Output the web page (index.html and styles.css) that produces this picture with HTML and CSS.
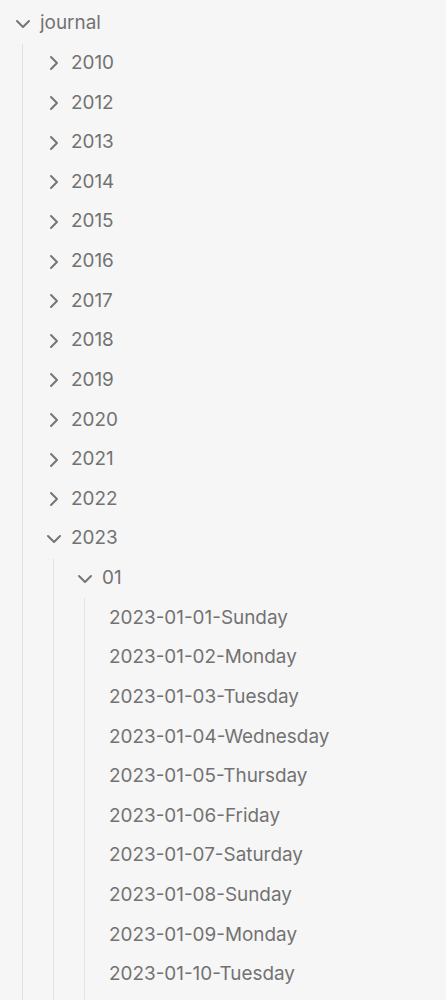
FILE: index.html
```html
<!DOCTYPE html>
<html lang="en">
<head>
<meta charset="utf-8">
<title>journal</title>
<link rel="stylesheet" href="styles.css">
</head>
<body>
<div class="tree">
  <div class="row root-row">
    <svg class="chev" viewBox="0 0 24 24"><path d="M6 9l6 6 6-6"/></svg>
    <span class="label">journal</span>
  </div>
  <div class="children root-children">
    <div class="row"><svg class="chev" viewBox="0 0 24 24"><path d="M9 6l6 6-6 6"/></svg><span class="label">2010</span></div>
    <div class="row"><svg class="chev" viewBox="0 0 24 24"><path d="M9 6l6 6-6 6"/></svg><span class="label">2012</span></div>
    <div class="row"><svg class="chev" viewBox="0 0 24 24"><path d="M9 6l6 6-6 6"/></svg><span class="label">2013</span></div>
    <div class="row"><svg class="chev" viewBox="0 0 24 24"><path d="M9 6l6 6-6 6"/></svg><span class="label">2014</span></div>
    <div class="row"><svg class="chev" viewBox="0 0 24 24"><path d="M9 6l6 6-6 6"/></svg><span class="label">2015</span></div>
    <div class="row"><svg class="chev" viewBox="0 0 24 24"><path d="M9 6l6 6-6 6"/></svg><span class="label">2016</span></div>
    <div class="row"><svg class="chev" viewBox="0 0 24 24"><path d="M9 6l6 6-6 6"/></svg><span class="label">2017</span></div>
    <div class="row"><svg class="chev" viewBox="0 0 24 24"><path d="M9 6l6 6-6 6"/></svg><span class="label">2018</span></div>
    <div class="row"><svg class="chev" viewBox="0 0 24 24"><path d="M9 6l6 6-6 6"/></svg><span class="label">2019</span></div>
    <div class="row"><svg class="chev" viewBox="0 0 24 24"><path d="M9 6l6 6-6 6"/></svg><span class="label">2020</span></div>
    <div class="row"><svg class="chev" viewBox="0 0 24 24"><path d="M9 6l6 6-6 6"/></svg><span class="label">2021</span></div>
    <div class="row"><svg class="chev" viewBox="0 0 24 24"><path d="M9 6l6 6-6 6"/></svg><span class="label">2022</span></div>
    <div class="row"><svg class="chev" viewBox="0 0 24 24"><path d="M6 9l6 6 6-6"/></svg><span class="label">2023</span></div>
    <div class="children">
      <div class="row"><svg class="chev" viewBox="0 0 24 24"><path d="M6 9l6 6 6-6"/></svg><span class="label">01</span></div>
      <div class="children files">
        <div class="row file"><span class="label">2023-01-01-Sunday</span></div>
        <div class="row file"><span class="label">2023-01-02-Monday</span></div>
        <div class="row file"><span class="label">2023-01-03-Tuesday</span></div>
        <div class="row file"><span class="label">2023-01-04-Wednesday</span></div>
        <div class="row file"><span class="label">2023-01-05-Thursday</span></div>
        <div class="row file"><span class="label">2023-01-06-Friday</span></div>
        <div class="row file"><span class="label">2023-01-07-Saturday</span></div>
        <div class="row file"><span class="label">2023-01-08-Sunday</span></div>
        <div class="row file"><span class="label">2023-01-09-Monday</span></div>
        <div class="row file"><span class="label">2023-01-10-Tuesday</span></div>
      </div>
    </div>
  </div>
</div>
</body>
</html>
```

FILE: styles.css
```css
html, body {
  margin: 0;
  padding: 0;
  background: #f6f6f6;
}
body {
  font-family: Inter, "Noto Sans", "Liberation Sans", sans-serif;
  font-size: 18.9px;
  color: #727272;
  overflow: hidden;
  height: 1000px;
}
.tree {
  padding-top: 4px;
}
.row {
  display: flex;
  align-items: center;
  height: 39.625px;
  padding-left: 19px;
  white-space: nowrap;
}
.root-row {
  padding-left: 11px;
}
.chev {
  width: 24px;
  height: 24px;
  flex: none;
  margin-right: 5px;
  fill: none;
  stroke: #767676;
  stroke-width: 2;
  stroke-linecap: round;
  stroke-linejoin: round;
}
.label {
  line-height: 1;
}
.children {
  margin-left: 30px;
  border-left: 1px solid #e2e2e2;
}
.root-children {
  margin-left: 22px;
}
.files {
  padding-bottom: 40px;
}
.file {
  padding-left: 24px;
}
```
